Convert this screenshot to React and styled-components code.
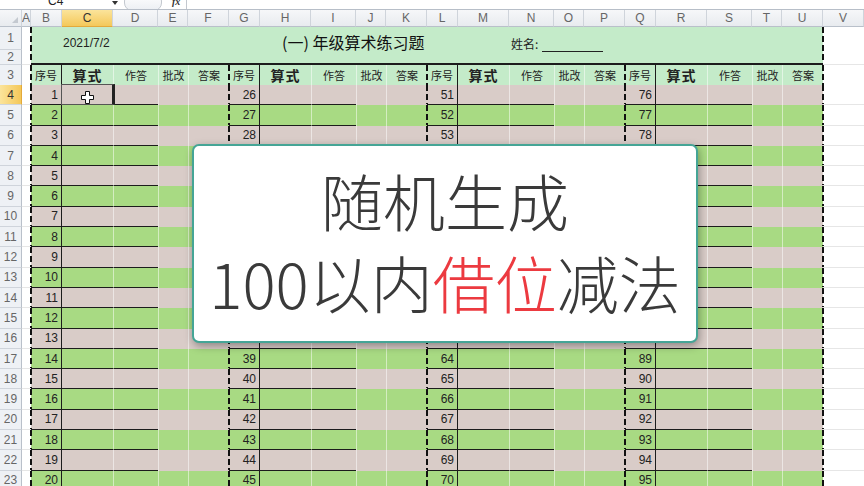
import React from 'react';
import styled, { createGlobalStyle, css } from 'styled-components';

const W = [31, 51, 45, 30, 41];
const GROUP = W.map((w) => `${w}px`).join(' ');
const TEMPLATE = `22px 9px repeat(4, ${GROUP}) 1fr`;
const INNER = `repeat(4, ${GROUP})`;

const COL = {
  pink: '#d9ccc8',
  green: '#a8da83',
  pale: '#c4ebc9',
  line: '#1c1c1c',
  grid: 'rgba(255,255,255,0.5)',
  head: '#eef1f5',
  headLine: '#cfd4db',
};

const SHEET_FONT = `"Liberation Sans", "Noto Sans CJK SC", sans-serif`;
const CJK_FONT = `"Noto Sans CJK SC", "Noto Sans", sans-serif`;

const Global = createGlobalStyle`
  html, body { margin: 0; padding: 0; background: #fff; overflow: hidden; }
  body { width: 864px; height: 486px; font-family: ${SHEET_FONT}; }
`;

const dashed = (side) => css`
  &::${side === 'left' ? 'before' : 'after'} {
    content: '';
    position: absolute;
    ${side}: -1px;
    top: 0;
    bottom: 0;
    width: 2px;
    background: repeating-linear-gradient(to bottom, #111 0 6px, transparent 6px 9px);
    z-index: 2;
  }
`;

const Page = styled.div`
  position: relative;
  width: 864px;
  height: 486px;
  overflow: hidden;
`;

/* formula bar */
const FormulaBar = styled.div`
  height: 9px;
  border-bottom: 1px solid #b7bec8;
  display: flex;
  align-items: flex-start;
  overflow: hidden;
  background: #fff;
`;
const NameBox = styled.div`
  width: 124px;
  display: flex;
  align-items: flex-start;
  font-size: 12px;
  line-height: 12px;
  color: #222;
  margin-top: -5px;
`;
const NameText = styled.span`
  margin-left: 48px;
  flex: 1;
`;
const DropArrow = styled.span`
  width: 0;
  height: 0;
  margin: 6px 6px 0 0;
  border-left: 3px solid transparent;
  border-right: 3px solid transparent;
  border-top: 4px solid #333;
`;
const Pill = styled.div`
  width: 36px;
  height: 16px;
  margin-top: -7px;
  border: 1px solid #c3c8cf;
  border-radius: 8px;
  background: linear-gradient(#fff, #eceff3);
`;
const Fx = styled.span`
  margin: -4px 0 0 10px;
  font-family: "Liberation Serif", serif;
  font-style: italic;
  font-weight: bold;
  font-size: 10px;
  color: #333;
  width: 14px;
`;
const FormulaInput = styled.div`
  flex: 1;
  height: 9px;
  border-left: 1px solid #c3c8cf;
`;

/* grid rows */
const Row = styled.div`
  display: grid;
  grid-template-columns: ${TEMPLATE};
  height: ${(p) => p.$h}px;
`;

const ColHead = styled.div`
  box-sizing: border-box;
  display: flex;
  align-items: center;
  justify-content: center;
  font-size: 12px;
  color: ${(p) => (p.$active ? '#333' : '#666')};
  background: ${(p) =>
    p.$active ? 'linear-gradient(#fbe49b, #f4c85a)' : 'linear-gradient(#f6f7f9, #e8ebef)'};
  border-right: 1px solid ${COL.headLine};
  border-bottom: 1px solid ${(p) => (p.$active ? '#e3a93b' : '#b9c0ca')};
  overflow: hidden;
`;
const Corner = styled(ColHead)`
  position: relative;
  &::after {
    content: '';
    position: absolute;
    right: 3px;
    bottom: 3px;
    border-left: 6px solid transparent;
    border-bottom: 6px solid #c4c9d0;
  }
`;

const RowHead = styled.div`
  box-sizing: border-box;
  display: flex;
  align-items: center;
  justify-content: center;
  font-size: 12px;
  color: ${(p) => (p.$active ? '#333' : '#666')};
  background: ${(p) => (p.$active ? 'linear-gradient(90deg, #fbe49b, #f4c85a)' : COL.head)};
  border-right: 1px solid ${(p) => (p.$active ? '#e3a93b' : '#b9c0ca')};
  border-bottom: 1px solid ${COL.headLine};
`;

const Blank = styled.div`
  box-sizing: border-box;
  position: relative;
  background: #fff;
  border-bottom: 1px solid ${(p) => (p.$noLine ? '#fff' : '#e6e6e6')};
  ${(p) => p.$dash && dashed('left')}
`;

const Cell = styled.div`
  box-sizing: border-box;
  position: relative;
  display: flex;
  align-items: center;
  justify-content: ${(p) => p.$justify || 'center'};
  padding: 0 3px;
  background: ${(p) => p.$bg};
  border-left: ${(p) => (p.$grid ? `1px solid ${COL.grid}` : 'none')};
  border-right: ${(p) => (p.$divider ? `1px solid ${COL.line}` : 'none')};
  border-bottom: ${(p) => (p.$under ? `1px solid ${COL.line}` : 'none')};
  font-size: 12px;
  color: #222;
  white-space: nowrap;
  ${(p) => p.$dash && dashed('left')}
`;

const HeadLabel = styled.span`
  font-family: ${CJK_FONT};
  font-size: ${(p) => (p.$big ? 14 : 11)}px;
  font-weight: ${(p) => (p.$big ? 700 : 400)};
  color: #222;
  letter-spacing: ${(p) => (p.$big ? 1 : 0)}px;
`;

/* title band (rows 1-2) */
const TitleBand = styled.div`
  display: grid;
  grid-template-columns: ${TEMPLATE};
  grid-template-rows: 23px 15px;
`;
const Merged = styled.div`
  grid-column: 3 / 23;
  grid-row: 1 / 3;
  position: relative;
  box-sizing: border-box;
  background: ${COL.pale};
  border-bottom: 2px solid ${COL.line};
  display: grid;
  grid-template-columns: ${INNER};
  grid-template-rows: 1fr;
  align-items: start;
  ${dashed('left')}
  ${dashed('right')}
`;
const DateText = styled.div`
  grid-column: 2 / 5;
  grid-row: 1;
  margin: 9px 0 0 1px;
  font-size: 12px;
  color: #222;
`;
const Title = styled.div`
  grid-column: 7 / 13;
  grid-row: 1;
  margin: 3px 0 0 22px;
  font-family: ${CJK_FONT};
  font-size: 16px;
  color: #111;
  white-space: nowrap;
`;
const NameLabel = styled.div`
  grid-column: 13 / 21;
  grid-row: 1;
  margin: 8px 0 0 2px;
  display: flex;
  align-items: flex-end;
  font-family: ${CJK_FONT};
  font-size: 12px;
  color: #222;
`;
const Blankline = styled.span`
  display: inline-block;
  width: 61px;
  height: 14px;
  margin-left: 4px;
  border-bottom: 1px solid #222;
`;

/* selection and cursor */
const Selection = styled.div`
  position: absolute;
  left: -1px;
  top: -1px;
  right: -2px;
  bottom: -1px;
  border: 1px solid #555;
  border-right: 3px solid #222;
  z-index: 3;
`;
const CursorSvg = styled.svg`
  position: absolute;
  left: 19px;
  top: 6px;
  z-index: 4;
`;

/* overlay card */
const Card = styled.div`
  position: absolute;
  left: 192px;
  top: 144px;
  width: 506px;
  height: 199px;
  box-sizing: border-box;
  background: #fff;
  border: 2px solid #45a596;
  border-radius: 7px;
  box-shadow: 1px 3px 8px rgba(0, 0, 0, 0.35);
  display: flex;
  flex-direction: column;
  align-items: center;
  justify-content: center;
  z-index: 10;
  padding-bottom: 6px;
`;
const CardLine = styled.div`
  font-family: ${CJK_FONT};
  font-weight: 300;
  font-size: 62px;
  line-height: 82px;
  color: #3a3a3a;
  white-space: nowrap;
`;
const Red = styled.span`
  color: #ec3a40;
`;

const LETTERS = 'BCDEFGHIJKLMNOPQRSTU'.split('');

function ContentRow({ i }) {
  const bg = i % 2 === 1 ? COL.pink : COL.green;
  const sheetRow = i + 3;
  return (
    <Row $h={20.3}>
      <RowHead $active={sheetRow === 4}>{sheetRow}</RowHead>
      <Blank />
      {[0, 1, 2, 3].map((g) => (
        <React.Fragment key={g}>
          <Cell $bg={bg} $dash $divider $under $justify="flex-end">
            {g * 25 + i}
          </Cell>
          <Cell $bg={bg} $under>
            {g === 0 && i === 1 && (
              <>
                <Selection />
                <CursorSvg width="13" height="13" viewBox="0 0 13 13">
                  <path
                    d="M4.5 0.5h4v4h4v4h-4v4h-4v-4h-4v-4h4z"
                    fill="#fff"
                    stroke="#111"
                    strokeWidth="1"
                  />
                </CursorSvg>
              </>
            )}
          </Cell>
          <Cell $bg={bg} $grid $under />
          <Cell $bg={bg} $grid />
          <Cell $bg={bg} $grid />
        </React.Fragment>
      ))}
      <Blank $dash />
    </Row>
  );
}

export default function App() {
  return (
    <Page>
      <Global />
      <FormulaBar>
        <NameBox>
          <NameText>C4</NameText>
          <DropArrow />
        </NameBox>
        <Pill />
        <Fx>fx</Fx>
        <FormulaInput />
      </FormulaBar>

      <Row $h={17}>
        <Corner />
        <ColHead>A</ColHead>
        {LETTERS.map((l) => (
          <ColHead key={l} $active={l === 'C'}>
            {l}
          </ColHead>
        ))}
        <ColHead>V</ColHead>
      </Row>

      <TitleBand>
        <RowHead>1</RowHead>
        <Blank $noLine />
        <Merged>
          <DateText>2021/7/2</DateText>
          <Title>(一) 年级算术练习题</Title>
          <NameLabel>
            姓名:
            <Blankline />
          </NameLabel>
        </Merged>
        <Blank $noLine />
        <RowHead>2</RowHead>
        <Blank />
        <Blank />
      </TitleBand>

      <Row $h={20}>
        <RowHead>3</RowHead>
        <Blank />
        {[0, 1, 2, 3].map((g) => (
          <React.Fragment key={g}>
            <Cell $bg={COL.pale} $dash $divider $under>
              <HeadLabel>序号</HeadLabel>
            </Cell>
            <Cell $bg={COL.pale} $under>
              <HeadLabel $big>算式</HeadLabel>
            </Cell>
            <Cell $bg={COL.pale} $grid $under>
              <HeadLabel>作答</HeadLabel>
            </Cell>
            <Cell $bg={COL.pale} $grid $under>
              <HeadLabel>批改</HeadLabel>
            </Cell>
            <Cell $bg={COL.pale} $grid $under>
              <HeadLabel>答案</HeadLabel>
            </Cell>
          </React.Fragment>
        ))}
        <Blank $dash />
      </Row>

      {Array.from({ length: 20 }, (_, k) => (
        <ContentRow key={k} i={k + 1} />
      ))}

      <Card>
        <CardLine>随机生成</CardLine>
        <CardLine>
          100以内<Red>借位</Red>减法
        </CardLine>
      </Card>
    </Page>
  );
}
